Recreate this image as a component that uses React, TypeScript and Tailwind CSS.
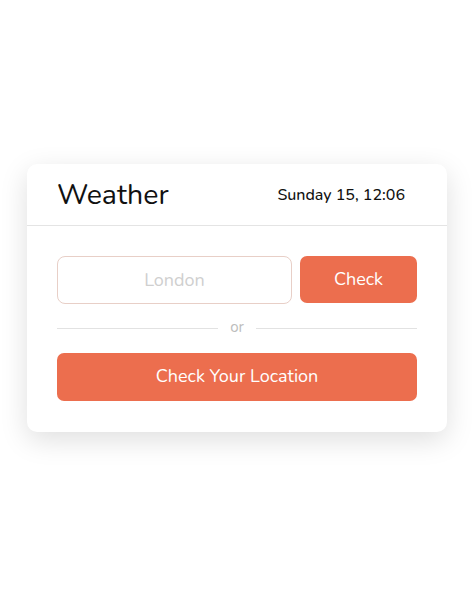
export default function App() {
  return (
    <div className="min-h-[595px] w-full bg-white flex items-center justify-center pr-[2px] font-['Nunito','Lato',sans-serif]">
      <div className="w-[420px] bg-white rounded-[10px] shadow-[0_8px_28px_rgba(0,0,0,0.13)]">
        <div className="h-[62px] flex items-center justify-between pl-[30px] pr-[42px] border-b border-[#e4e4e4]">
          <h1 className="text-[28.5px] leading-none text-[#111] pt-[2px]">Weather</h1>
          <span className="text-[16px] font-medium text-[#111] pt-[1px]">Sunday 15, 12:06</span>
        </div>
        <div className="px-[30px] pt-[30px] pb-[31px]">
          <div className="flex gap-[8px]">
            <input
              placeholder="London"
              className="w-[235px] h-[48px] rounded-[8px] border border-[#e8cfc7] text-center text-[18px] text-[#333] placeholder:text-[#cfcfcf] outline-none"
            />
            <button className="flex-1 h-[47px] rounded-[7px] bg-[#ec6e4e] text-white text-[18px]">
              Check
            </button>
          </div>
          <div className="flex items-center gap-[12px] h-[49px]">
            <div className="flex-1 h-px bg-[#e2e2e2]" />
            <span className="text-[15px] text-[#bdbdbd] leading-none -mt-[1px]">or</span>
            <div className="flex-1 h-px bg-[#e2e2e2]" />
          </div>
          <button className="w-full h-[48px] rounded-[7px] bg-[#ec6e4e] text-white text-[18px]">
            Check Your Location
          </button>
        </div>
      </div>
    </div>
  );
}
